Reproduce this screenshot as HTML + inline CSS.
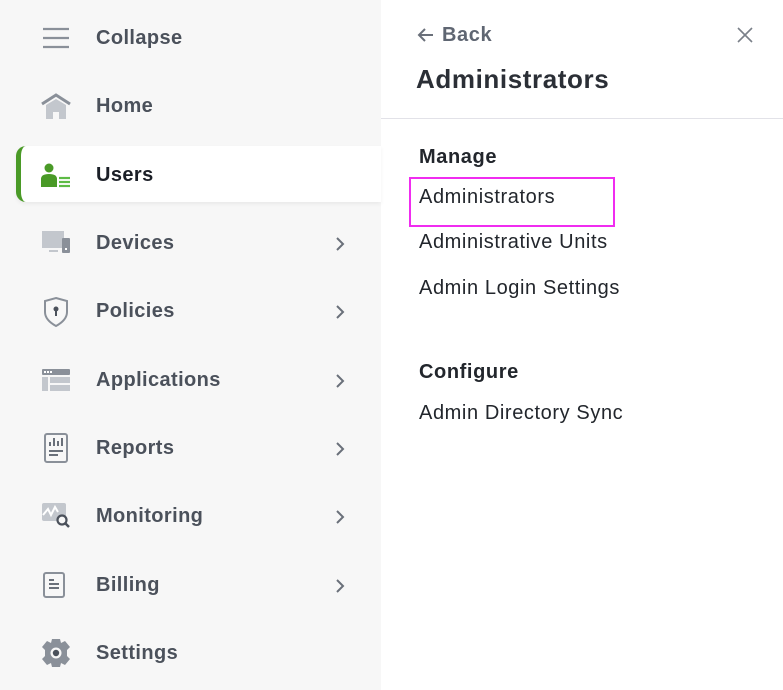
<!DOCTYPE html>
<html><head><style>
*{margin:0;padding:0;box-sizing:border-box}
body{width:783px;height:690px;overflow:hidden;background:#fff;font-family:"Liberation Sans",sans-serif;position:relative}
#side{position:absolute;left:0;top:0;width:381px;height:690px;background:#f7f7f7}
.row{position:absolute;left:0;width:381px;height:40px}
.row svg.ic{position:absolute;left:40px}
.row .t{position:absolute;left:96px;top:9px;font-size:20px;font-weight:bold;color:#4b515b;letter-spacing:0.4px}
.row .ch{position:absolute;left:335px;top:13px}
#sel{position:absolute;left:16px;top:146px;width:365px;height:56px;background:#fff;border-left:5px solid #4a9a27;border-radius:10px 0 0 10px;box-shadow:0 2px 4px rgba(0,0,0,.06)}
.r{position:absolute;font-size:20px;color:#22262c;letter-spacing:0.6px}
</style></head><body>
<div id="side">
<div id="sel"></div>
<div class="row" style="top:18px"><svg class="ic" style="top:8px" width="32" height="24" viewBox="0 0 32 24"><g stroke="#8a9099" stroke-width="2.2"><line x1="3" y1="3" x2="29" y2="3"/><line x1="3" y1="12" x2="29" y2="12"/><line x1="3" y1="21" x2="29" y2="21"/></g></svg><span class="t">Collapse</span></div>
<div class="row" style="top:86px"><svg class="ic" style="top:7px" width="32" height="26" viewBox="0 0 32 26"><path d="M2 11L16 2 30 11" stroke="#8a9099" stroke-width="3" fill="none"/><path d="M6 12L16 6 26 12V26H19V19H13V26H6Z" fill="#c3c7cd"/></svg><span class="t">Home</span></div>
<div class="row" style="top:155px"><svg class="ic" style="top:8px" width="32" height="26" viewBox="0 0 32 26"><circle cx="9" cy="5" r="4.5" fill="#4a9a27"/><path d="M1 24V16Q1 11 9 11 17 11 17 16V24Z" fill="#4a9a27"/><g stroke="#5dbb45" stroke-width="2.2"><line x1="19" y1="15" x2="30" y2="15"/><line x1="19" y1="19" x2="30" y2="19"/><line x1="19" y1="23" x2="30" y2="23"/></g></svg><span class="t" style="color:#1b1f27">Users</span></div>
<div class="row" style="top:223px"><svg class="ic" style="top:8px" width="32" height="24" viewBox="0 0 32 24"><rect x="2" y="0" width="22" height="17" fill="#c3c7cd"/><rect x="9" y="19" width="9" height="2" fill="#c3c7cd"/><rect x="22" y="7" width="8" height="15" rx="1" fill="#8a9099"/><rect x="25" y="17" width="2" height="2" fill="#fff"/></svg><span class="t">Devices</span><svg class="ch" width="10" height="16" viewBox="0 0 10 16"><path d="M2 2L8 8 2 14" stroke="#6a707a" stroke-width="2" fill="none"/></svg></div>
<div class="row" style="top:291px"><svg class="ic" style="top:5px" width="32" height="32" viewBox="0 0 32 32"><path d="M16 2L27 5V16Q27 24 16 30 5 24 5 16V5Z" stroke="#8a9099" stroke-width="2" fill="#f7f7f7"/><circle cx="16" cy="13" r="2.5" fill="#4b515b"/><rect x="15" y="14" width="2" height="6" fill="#4b515b"/></svg><span class="t">Policies</span><svg class="ch" width="10" height="16" viewBox="0 0 10 16"><path d="M2 2L8 8 2 14" stroke="#6a707a" stroke-width="2" fill="none"/></svg></div>
<div class="row" style="top:360px"><svg class="ic" style="top:8px" width="32" height="24" viewBox="0 0 32 24"><rect x="2" y="1" width="28" height="6" rx="1" fill="#8a9099"/><g fill="#fff"><rect x="4" y="3" width="2" height="2"/><rect x="7" y="3" width="2" height="2"/><rect x="10" y="3" width="2" height="2"/></g><rect x="2" y="9" width="6" height="14" fill="#c3c7cd"/><rect x="10" y="9" width="20" height="6" fill="#c3c7cd"/><rect x="10" y="17" width="20" height="6" fill="#c3c7cd"/></svg><span class="t">Applications</span><svg class="ch" width="10" height="16" viewBox="0 0 10 16"><path d="M2 2L8 8 2 14" stroke="#6a707a" stroke-width="2" fill="none"/></svg></div>
<div class="row" style="top:428px"><svg class="ic" style="top:4px" width="32" height="32" viewBox="0 0 32 32"><rect x="5" y="2" width="22" height="28" rx="2" stroke="#8a9099" stroke-width="2" fill="none"/><g stroke="#6a707a" stroke-width="2"><line x1="10" y1="10" x2="10" y2="14"/><line x1="14" y1="6" x2="14" y2="14"/><line x1="18" y1="9" x2="18" y2="14"/><line x1="22" y1="6" x2="22" y2="14"/><line x1="9" y1="19" x2="23" y2="19"/><line x1="9" y1="23" x2="18" y2="23"/></g></svg><span class="t">Reports</span><svg class="ch" width="10" height="16" viewBox="0 0 10 16"><path d="M2 2L8 8 2 14" stroke="#6a707a" stroke-width="2" fill="none"/></svg></div>
<div class="row" style="top:496px"><svg class="ic" style="top:7px" width="32" height="26" viewBox="0 0 32 26"><rect x="2" y="0" width="24" height="18" rx="2" fill="#c3c7cd"/><path d="M3 12L8 6 11 12 15 4 18 9" stroke="#fff" stroke-width="2" fill="none"/><circle cx="22" cy="17" r="4.5" stroke="#4b515b" stroke-width="2.2" fill="#f7f7f7"/><line x1="25" y1="20" x2="29" y2="24" stroke="#4b515b" stroke-width="2.5"/></svg><span class="t">Monitoring</span><svg class="ch" width="10" height="16" viewBox="0 0 10 16"><path d="M2 2L8 8 2 14" stroke="#6a707a" stroke-width="2" fill="none"/></svg></div>
<div class="row" style="top:565px"><svg class="ic" style="top:7px" width="32" height="26" viewBox="0 0 32 26"><rect x="4" y="1" width="20" height="24" rx="2" stroke="#8a9099" stroke-width="2" fill="none"/><g stroke="#6a707a" stroke-width="2"><line x1="9" y1="8" x2="14" y2="8"/><line x1="9" y1="12" x2="19" y2="12"/><line x1="9" y1="16" x2="19" y2="16"/></g></svg><span class="t">Billing</span><svg class="ch" width="10" height="16" viewBox="0 0 10 16"><path d="M2 2L8 8 2 14" stroke="#6a707a" stroke-width="2" fill="none"/></svg></div>
<div class="row" style="top:633px"><svg class="ic" style="top:5px" width="32" height="30" viewBox="0 0 32 30"><path d="M12 1h8l1 4 4-2 5 6-3 3v6l3 3-5 6-4-2-1 4h-8l-1-4-4 2-5-6 3-3v-6l-3-3 5-6 4 2z" fill="#8a9099"/><circle cx="16" cy="15" r="5.5" fill="#f7f7f7"/><circle cx="16" cy="15" r="3.2" fill="#4b515b"/></svg><span class="t">Settings</span></div>
</div>
<svg style="position:absolute;left:416px;top:27px" width="18" height="16" viewBox="0 0 18 16"><path d="M9 2L3 8 9 14M3 8H17" stroke="#6a707a" stroke-width="2" fill="none"/></svg>
<div class="r" style="left:442px;top:24px;font-weight:bold;color:#5f6672">Back</div>
<svg style="position:absolute;left:737px;top:27px" width="16" height="16"><path d="M1 1L15 15M15 1L1 15" stroke="#7a8089" stroke-width="1.6"/></svg>
<div class="r" style="left:416px;top:64px;font-size:26px;font-weight:bold;color:#2b2f36">Administrators</div>
<div style="position:absolute;left:381px;top:118px;width:402px;height:1px;background:#e2e2e8"></div>
<div class="r" style="left:419px;top:146px;font-weight:bold">Manage</div>
<div style="position:absolute;left:409px;top:177px;width:206px;height:50px;border:2px solid #f02cf0"></div>
<div class="r" style="left:419px;top:186px">Administrators</div>
<div class="r" style="left:419px;top:231px">Administrative Units</div>
<div class="r" style="left:419px;top:277px">Admin Login Settings</div>
<div class="r" style="left:419px;top:361px;font-weight:bold">Configure</div>
<div class="r" style="left:419px;top:402px">Admin Directory Sync</div>
</body></html>
